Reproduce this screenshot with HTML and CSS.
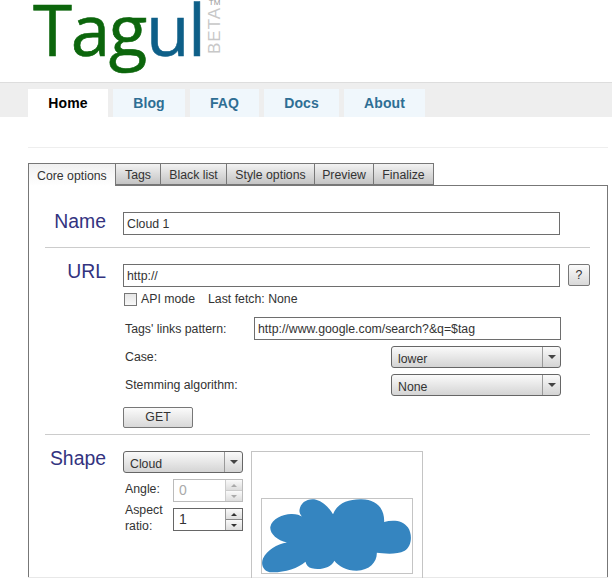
FILE: index.html
```html
<!DOCTYPE html>
<html lang="en">
<head>
    <meta charset="UTF-8">
    <title>Tagul</title>
    <link rel="stylesheet" href="styles.css">
</head>
<body>
    <div class="header">
        <div class="logo"><span class="logo-green">Tag</span><span class="logo-blue">ul</span></div>
        <div class="logo-side">
            <div class="tm">TM</div>
            <div class="beta">BETA</div>
        </div>
    </div>

    <div class="nav">
        <a class="nav-item home">Home</a>
        <a class="nav-item blog">Blog</a>
        <a class="nav-item faq">FAQ</a>
        <a class="nav-item docs">Docs</a>
        <a class="nav-item about">About</a>
    </div>

    <div class="content">
        <div class="rule"></div>

        <div class="tabs">
            <div class="tab active">Core options</div>
            <div class="tab">Tags</div>
            <div class="tab">Black list</div>
            <div class="tab">Style options</div>
            <div class="tab">Preview</div>
            <div class="tab">Finalize</div>
        </div>

        <div class="panel">
            <div class="section name-section">
                <div class="label">Name</div>
                <div class="field"><div class="input wide">Cloud 1</div></div>
            </div>

            <div class="section url-section">
                <div class="label">URL</div>
                <div class="field">
                    <div class="url-row">
                        <div class="input wide">http://</div>
                        <div class="btn help">?</div>
                    </div>
                    <div class="api-row">
                        <span class="checkbox"></span>
                        <span class="api-label">API mode</span>
                        <span>Last fetch: None</span>
                    </div>
                    <div class="opt-row pattern-row">
                        <span class="opt-label">Tags' links pattern:</span>
                        <div class="input pattern">http://www.google.com/search?&amp;q=$tag</div>
                    </div>
                    <div class="opt-row case-row">
                        <span class="opt-label">Case:</span>
                        <div class="select opt-select"><span class="select-text">lower</span><span class="select-arrow"><i></i></span></div>
                    </div>
                    <div class="opt-row stem-row">
                        <span class="opt-label">Stemming algorithm:</span>
                        <div class="select opt-select"><span class="select-text">None</span><span class="select-arrow"><i></i></span></div>
                    </div>
                    <div class="btn get">GET</div>
                </div>
            </div>

            <div class="section shape-section">
                <div class="label">Shape</div>
                <div class="shape-controls">
                    <div class="select shape-select"><span class="select-text">Cloud</span><span class="select-arrow"><i></i></span></div>
                    <div class="spin-row angle-row">
                        <span class="spin-label">Angle:</span>
                        <div class="spin disabled"><span class="spin-value">0</span><span class="spin-btns"><b><i class="up"></i></b><b><i class="down"></i></b></span></div>
                    </div>
                    <div class="spin-row aspect-row">
                        <span class="spin-label">Aspect ratio:</span>
                        <div class="spin"><span class="spin-value">1</span><span class="spin-btns"><b><i class="up"></i></b><b><i class="down"></i></b></span></div>
                    </div>
                </div>
                <div class="shape-preview">
                    <div class="shape-frame">
                        <svg viewBox="65 176 452 226" width="150" height="75">
                            <path fill="#3585c0" d="M178 210C180 185 205 172 228 178C250 184 270 205 279 222C290 190 325 176 365 177C410 178 435 205 433 245C460 238 490 240 505 262C520 285 515 320 495 332C470 345 430 340 411 338C412 365 390 392 350 392C320 392 295 378 283 362C275 382 240 392 215 385C205 382 198 375 196 365C175 385 130 398 95 397C70 396 60 375 68 355C80 330 110 312 140 307C110 300 88 280 90 260C95 235 130 220 155 221C170 221 180 225 185 229C180 222 177 216 178 210Z"/>
                        </svg>
                    </div>
                </div>
            </div>
        </div>
    </div>
</body>
</html>
```

FILE: styles.css
```css
* {
    margin: 0;
    padding: 0;
    box-sizing: border-box;
}

html, body {
    height: 578px;
    overflow: hidden;
}

body {
    font-family: "Liberation Sans", Arial, sans-serif;
    font-size: 12.3px;
    color: #333333;
    background: #ffffff;
}

.header {
    height: 82px;
    padding-left: 33px;
    display: flex;
    align-items: flex-start;
}

.logo {
    font-family: "Open Sans", sans-serif;
    font-size: 71px;
    line-height: 66px;
    letter-spacing: -1.4px;
    -webkit-text-stroke: 0.6px;
    margin-top: -4px;
    height: 78px;
}

.logo-green { color: #0c660c; }
.logo-blue { color: #0e5f88; }

.logo-side {
    display: flex;
    flex-direction: column;
    align-items: center;
    width: 14px;
    margin-left: 3px;
}

.tm {
    font-size: 8px;
    line-height: 6px;
    color: #999999;
    height: 9px;
}

.beta {
    writing-mode: vertical-rl;
    transform: rotate(180deg);
    font-size: 17px;
    line-height: 14px;
    letter-spacing: 1px;
    color: #c8c8c8;
    height: 45px;
}

.nav {
    height: 35px;
    background: #eeeeee;
    border-top: 1px solid #dddddd;
    padding: 6px 0 0 28px;
    display: flex;
    gap: 5px;
}

.nav-item {
    height: 28px;
    background: #f0f7fc;
    color: #2e6e94;
    font-size: 14px;
    font-weight: bold;
    line-height: 28px;
    letter-spacing: 0.1px;
    text-align: center;
}

.nav-item.home { width: 80px; background: #ffffff; color: #000000; }
.nav-item.blog { width: 72px; }
.nav-item.faq { width: 69px; }
.nav-item.docs { width: 75px; }
.nav-item.about { width: 81px; }

.content {
    padding: 30px 4px 0 28px;
}

.rule {
    height: 1px;
    background: #eeeeee;
    margin-bottom: 15px;
}

.tabs {
    display: flex;
    height: 23px;
    position: relative;
    z-index: 1;
}

.tab {
    height: 22px;
    line-height: 22px;
    padding: 0;
    border: 1px solid #777777;
    border-left: 0;
    background: linear-gradient(#f2f2f2, #c4c4c4);
    color: #333333;
    text-align: center;
    white-space: nowrap;
}

.tab:nth-child(2) { width: 45px; }
.tab:nth-child(3) { width: 66px; }
.tab:nth-child(4) { width: 88px; }
.tab:nth-child(5) { width: 59px; }
.tab:nth-child(6) { width: 60px; }

.tab.active {
    width: 88px;
    height: 23px;
    border-left: 1px solid #777777;
    border-bottom: 0;
    background: linear-gradient(#f0f0f0, #ffffff);
    padding: 0 0 0 8px;
    line-height: 24px;
    text-align: left;
}

.panel {
    height: 392px;
    margin-top: -1px;
    border: 1px solid #777777;
    border-bottom: 0;
    padding: 0 17px 0 16px;
    box-shadow: 0 1px 0 #e8e8e8;
}

.section {
    display: flex;
    border-bottom: 1px solid #cccccc;
}

.label {
    width: 61px;
    flex-shrink: 0;
    text-align: right;
    font-size: 19.4px;
    color: #33337f;
    line-height: 24px;
}

.field {
    flex: 1;
    padding-left: 17px;
}

.name-section {
    height: 62px;
    padding-top: 26px;
}

.url-section {
    height: 187px;
    padding-top: 16px;
}

.url-section .label { margin-top: -5px; }
.name-section .label { margin-top: -3px; }

.shape-section {
    border-bottom: 0;
    padding-top: 16px;
}

.shape-section .label { margin-top: -5px; }

.input {
    height: 23px;
    line-height: 22px;
    padding-left: 3px;
    border: 1px solid #6e6e6e;
    background: #ffffff;
    color: #333333;
    white-space: nowrap;
}

.input.wide { width: 437px; }

.url-row {
    display: flex;
    gap: 8px;
}

.btn {
    border: 1px solid #777777;
    border-radius: 2px;
    background: linear-gradient(#fbfbfb, #d8d8d8);
    color: #333333;
    text-align: center;
}

.btn.help {
    width: 22px;
    height: 22px;
    line-height: 20px;
}

.btn.get {
    width: 70px;
    height: 21px;
    line-height: 19px;
    margin-top: 11px;
}

.api-row {
    display: flex;
    align-items: center;
    height: 14px;
    margin: 5px 0 0 1px;
}

.checkbox {
    width: 13px;
    height: 13px;
    border: 1px solid #777777;
    background: linear-gradient(#e6e6e6, #f8f8f8);
    margin-right: 4px;
}

.api-label {
    margin-right: 13px;
}

.opt-row {
    display: flex;
    align-items: center;
    height: 23px;
    margin-left: 2px;
    justify-content: space-between;
    width: 436px;
}

.pattern-row { margin-top: 11px; }
.case-row { margin-top: 6px; height: 22px; }
.stem-row { margin-top: 6px; height: 22px; }

.input.pattern { width: 307px; padding-left: 3px; }

.select {
    display: flex;
    height: 22px;
    border: 1px solid #666666;
    border-radius: 3px;
    background: linear-gradient(#fafafa, #d4d4d4);
    color: #333333;
}

.opt-select { width: 170px; }
.shape-select { width: 120px; }

.select-text {
    flex: 1;
    line-height: 24px;
    padding-left: 6px;
}

.select-arrow {
    width: 18px;
    border-left: 1px solid #999999;
    display: flex;
    align-items: center;
    justify-content: center;
}

.select-arrow i {
    border-left: 4px solid transparent;
    border-right: 4px solid transparent;
    border-top: 4px solid #444444;
}

.shape-controls {
    width: 120px;
    margin-left: 17px;
    flex-shrink: 0;
}

.spin-row {
    display: flex;
    align-items: flex-start;
    justify-content: space-between;
    padding-left: 2px;
}

.angle-row { margin-top: 6px; }

.angle-row .spin-label { margin-top: 2px; }

.aspect-row .spin { margin-top: 6px; }

.spin-label {
    width: 48px;
    line-height: 16px;
}

.spin {
    display: flex;
    width: 70px;
    height: 23px;
    border: 1px solid #666666;
    color: #333333;
}

.spin-value {
    flex: 1;
    line-height: 21px;
    padding-left: 5px;
    font-size: 14px;
}

.spin-btns {
    width: 17px;
    display: flex;
    flex-direction: column;
    border-left: 1px solid #999999;
}

.spin-btns b {
    flex: 1;
    display: flex;
    align-items: center;
    justify-content: center;
    background: linear-gradient(#fafafa, #dddddd);
}

.spin-btns b + b { border-top: 1px solid #888888; }

.spin-btns .up, .spin-btns .down {
    border-left: 3px solid transparent;
    border-right: 3px solid transparent;
}

.spin-btns .up { border-bottom: 3px solid #333333; }
.spin-btns .down { border-top: 3px solid #333333; }

.spin.disabled { border-color: #bbbbbb; color: #aaaaaa; }
.spin.disabled .spin-btns { border-left-color: #cccccc; }
.spin.disabled .spin-btns b + b { border-top-color: #cccccc; }
.spin.disabled .up { border-bottom-color: #aaaaaa; }
.spin.disabled .down { border-top-color: #aaaaaa; }

.shape-preview {
    width: 172px;
    height: 130px;
    margin-left: 8px;
    border: 1px solid #c4c4c4;
    padding: 46px 9px 0;
}

.shape-frame {
    width: 152px;
    height: 76px;
    border: 1px solid #c4c4c4;
    display: flex;
}
```
